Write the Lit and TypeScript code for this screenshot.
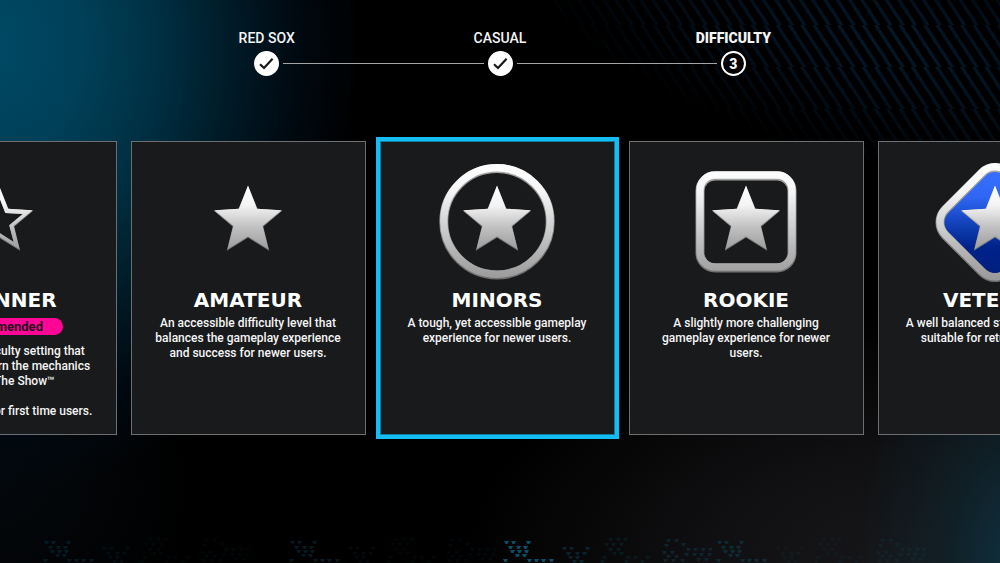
import { LitElement, html, svg, css, nothing } from "lit";
import { customElement, property, state } from "lit/decorators.js";
import { classMap } from "lit/directives/class-map.js";

type Emblem = "outline" | "plain" | "circle" | "square" | "diamond";

interface Difficulty {
  id: string;
  name: string;
  emblem: Emblem;
  tag?: string;
  lines: string[];
}

const DIFFICULTIES: Difficulty[] = [
  {
    id: "beginner",
    name: "BEGINNER",
    emblem: "outline",
    tag: "Recommended",
    lines: [
      "A beginner difficulty setting that",
      "helps players learn the mechanics",
      "of MLB® The Show™",
      "",
      "Recommended for first time users.",
    ],
  },
  {
    id: "amateur",
    name: "AMATEUR",
    emblem: "plain",
    lines: ["An accessible difficulty level that", "balances the gameplay experience", "and success for newer users."],
  },
  {
    id: "minors",
    name: "MINORS",
    emblem: "circle",
    lines: ["A tough, yet accessible gameplay", "experience for newer users."],
  },
  {
    id: "rookie",
    name: "ROOKIE",
    emblem: "square",
    lines: ["A slightly more challenging", "gameplay experience for newer", "users."],
  },
  {
    id: "veteran",
    name: "VETERAN",
    emblem: "diamond",
    lines: ["A well balanced starting difficulty", "suitable for returning users."],
  },
];

function starPath(cx: number, cy: number, outer: number, inner: number): string {
  const points: string[] = [];
  for (let i = 0; i < 10; i++) {
    const r = i % 2 ? inner : outer;
    const a = (Math.PI / 5) * i - Math.PI / 2;
    points.push(`${(cx + r * Math.cos(a)).toFixed(2)} ${(cy + r * Math.sin(a)).toFixed(2)}`);
  }
  return `M${points.join("L")}Z`;
}

const STAR = starPath(60, 59.6, 36, 16);
const STAR_FACE = starPath(60, 59, 35, 15.2);
const STAR_HOLE = starPath(60, 59.8, 25, 10.8);

@customElement("difficulty-emblem")
export class DifficultyEmblem extends LitElement {
  @property() kind: Emblem = "plain";

  static styles = css`
    :host {
      display: block;
      width: 120px;
      height: 120px;
    }
    svg {
      display: block;
      width: 100%;
      height: 100%;
    }
  `;

  private frame() {
    switch (this.kind) {
      case "circle":
        return svg`
          <circle cx="60" cy="59.8" r="53.2" fill="none" stroke="url(#edge)" stroke-width="9"/>
          <circle cx="60" cy="59" r="53.2" fill="none" stroke="url(#ring)" stroke-width="7.4"/>`;
      case "square":
        return svg`
          <rect x="14" y="14" width="92" height="92" rx="15" fill="none" stroke="url(#edge)" stroke-width="9"/>
          <rect x="14" y="13" width="92" height="92" rx="15" fill="none" stroke="url(#ring)" stroke-width="7.4"/>`;
      case "diamond":
        return svg`
          <path d="M60 5.5C65 5.5 69.5 7.5 73 11L109.5 47.5C113 51 115 55.5 115 60.5S113 70 109.5 73.5L73 110C69.5 113.5 65 115.5 60 115.5S50.5 113.5 47 110L10.5 73.5C7 70 5 65.5 5 60.5S7 51 10.5 47.5L47 11C50.5 7.5 55 5.5 60 5.5Z" fill="url(#blue)" stroke="url(#edge)" stroke-width="9"/>
          <path d="M60 4.8C65 4.8 69.5 6.8 73 10.3L109.5 46.8C113 50.3 115 54.8 115 59.8S113 69.3 109.5 72.8L73 109.3C69.5 112.8 65 114.8 60 114.8S50.5 112.8 47 109.3L10.5 72.8C7 69.3 5 64.8 5 59.8S7 50.3 10.5 46.8L47 10.3C50.5 6.8 55 4.8 60 4.8Z" fill="none" stroke="url(#ring)" stroke-width="7.4"/>`;
      default:
        return nothing;
    }
  }

  render() {
    const hollow = this.kind === "outline";
    return html`<svg viewBox="0 0 120 120" aria-hidden="true">
      <defs>
        <linearGradient id="face" x1="0" y1="24" x2="0" y2="88" gradientUnits="userSpaceOnUse">
          <stop offset="0" stop-color="#fff"/><stop offset=".3" stop-color="#f4f4f4"/>
          <stop offset=".65" stop-color="#c0c0c0"/><stop offset="1" stop-color="#9c9c9c"/>
        </linearGradient>
        <linearGradient id="shade" x1="0" y1="24" x2="0" y2="88" gradientUnits="userSpaceOnUse">
          <stop offset="0" stop-color="#d5d5d5"/><stop offset="1" stop-color="#747474"/>
        </linearGradient>
        <linearGradient id="ring" x1="0" y1="2" x2="0" y2="118" gradientUnits="userSpaceOnUse">
          <stop offset="0" stop-color="#fff"/><stop offset=".25" stop-color="#f4f4f4"/>
          <stop offset=".75" stop-color="#b4b4b4"/><stop offset="1" stop-color="#999"/>
        </linearGradient>
        <linearGradient id="edge" x1="0" y1="2" x2="0" y2="118" gradientUnits="userSpaceOnUse">
          <stop offset="0" stop-color="#a8a8a8"/><stop offset="1" stop-color="#6e6e6e"/>
        </linearGradient>
        <linearGradient id="blue" x1="0" y1="10" x2="0" y2="110" gradientUnits="userSpaceOnUse">
          <stop offset="0" stop-color="#366fff"/><stop offset=".25" stop-color="#2f66f4"/>
          <stop offset=".5" stop-color="#1444bd"/><stop offset=".75" stop-color="#00238a"/>
          <stop offset="1" stop-color="#001f80"/>
        </linearGradient>
      </defs>
      ${this.frame()}
      <path d=${hollow ? STAR + STAR_HOLE : STAR} fill="url(#shade)" fill-rule="evenodd"/>
      <path d=${hollow ? STAR_FACE + STAR_HOLE : STAR_FACE} fill="url(#face)" fill-rule="evenodd"/>
    </svg>`;
  }
}

// Triangle mosaic along the lower edge: [x, y] of each small triangle in a motif.
const MOTIF_A = [[0, 0], [7, 0], [22, 0], [4, 5], [12, 5], [19, 5], [6, 9], [13, 9], [20, 9], [11, 13], [18, 13], [-1, 18], [23, 18], [30, 18], [37, 18], [45, 18]];
const MOTIF_B = [[0, 6], [7, 6], [23, 6], [4, 11], [13, 11], [20, 11], [6, 15], [13, 15], [10, 19], [17, 19]];
const MOTIF_C = [[6, -3], [14, -3], [21, -3], [2, 2], [9, 2], [17, 2], [6, 7], [14, 7], [10, 11], [17, 11], [0, 15], [24, 15], [31, 15], [43, 15], [-2, 19], [22, 19], [38, 19]];
const MOTIF_D = [[4, -2], [12, -2], [2, 3], [19, 2], [0, 10], [8, 10], [24, 7], [31, 7], [39, 7], [46, 7], [4, 14], [12, 14], [22, 12], [30, 12], [37, 12], [45, 12], [1, 18], [9, 18], [18, 18], [34, 17], [42, 17]];
const MOSAIC: [number[][], number, number][] = [
  [MOTIF_A, 44, 0.26], [MOTIF_B, 102, 0.12], [MOTIF_C, 142, 0.08], [MOTIF_D, 200, 0.08],
  [MOTIF_A, 290, 0.28], [MOTIF_B, 348, 0.1], [MOTIF_C, 388, 0.08], [MOTIF_D, 446, 0.09],
  [MOTIF_A, 504, 0.85], [MOTIF_B, 562, 0.32], [MOTIF_C, 602, 0.18], [MOTIF_D, 662, 0.28],
  [MOTIF_A, 717, 0.34], [MOTIF_B, 776, 0.1], [MOTIF_C, 816, 0.1], [MOTIF_D, 876, 0.14],
];

@customElement("stage-backdrop")
export class StageBackdrop extends LitElement {
  static styles = css`
    :host {
      display: block;
      background:
        radial-gradient(ellipse 37% 80% at -1% 8%, #004966 0%, #004058 25%, #003044 45%, #001a26 66%, #000a12 82%, transparent 100%),
        radial-gradient(ellipse 16% 50% at 102% 100%, #0f3140 0%, #0f242db0 45%, transparent 100%),
        radial-gradient(ellipse 46% 45% at 92% 100%, #171719 0%, #101012 45%, transparent 100%),
        radial-gradient(ellipse 20% 30% at 0% 86%, #04080c 0%, transparent 100%),
        #000;
    }
    svg {
      display: block;
      width: 100%;
      height: 100%;
    }
  `;

  render() {
    return html`<svg viewBox="0 0 1000 563" preserveAspectRatio="xMidYMax slice" aria-hidden="true">
      <defs>
        <pattern id="weave" width="12.3" height="42" y="25" patternUnits="userSpaceOnUse">
          ${[-3, -2, -1, 0, 1].map(
            (i) => svg`<path d="M${i * 12.3 + 1} -2L${i * 12.3 + 31} 44" stroke="#04182a" stroke-width="3.2"/>`,
          )}
        </pattern>
        <radialGradient id="fade" cx="0" cy="0" r="1" gradientUnits="userSpaceOnUse"
          gradientTransform="translate(890 44) rotate(14) scale(380 125)">
          <stop offset="0" stop-color="#fff"/><stop offset=".35" stop-color="#fff" stop-opacity=".75"/>
          <stop offset="1" stop-color="#fff" stop-opacity="0"/>
        </radialGradient>
        <mask id="veil" maskUnits="userSpaceOnUse" x="0" y="0" width="1000" height="563">
          <rect width="1000" height="563" fill="url(#fade)"/>
        </mask>
      </defs>
      <rect x="480" width="520" height="240" fill="url(#weave)" mask="url(#veil)"/>
      ${MOSAIC.map(
        ([motif, x, opacity]) =>
          svg`<path fill="#0d5a78" opacity=${opacity} d=${motif.map(([dx, dy]) => `M${x + dx} ${541 + dy}h5l-1.5 3h-2z`).join("")}/>`,
      )}
    </svg>`;
  }
}

@customElement("step-tracker")
export class StepTracker extends LitElement {
  private steps = [
    { label: "RED SOX", done: true },
    { label: "CASUAL", done: true },
    { label: "DIFFICULTY", done: false },
  ];

  static styles = css`
    :host {
      display: block;
    }
    ol {
      display: grid;
      grid-template-columns: repeat(3, 1fr);
      margin: 0;
      padding: 0;
      list-style: none;
    }
    li {
      display: flex;
      flex-direction: column;
      gap: 5px;
      text-align: center;
      font-size: 14px;
      line-height: 16px;
    }
    .current {
      font-weight: 900;
    }
    .track {
      display: flex;
      align-items: center;
      gap: 4px;
    }
    .rule {
      flex: 1;
      height: 1px;
      background: #a2a4a6;
    }
    .blank {
      background: none;
    }
    .dot {
      display: grid;
      place-items: center;
      box-sizing: border-box;
      width: 25px;
      height: 25px;
      border: 2px solid #fff;
      border-radius: 50%;
      background: #fff;
    }
    .current .dot {
      background: #000;
    }
    svg {
      display: block;
      width: 17px;
      height: 17px;
    }
  `;

  render() {
    const last = this.steps.length - 1;
    return html`<ol>
      ${this.steps.map(
        (step, i) => html`<li class=${classMap({ current: !step.done })} aria-current=${step.done ? nothing : "step"}>
          <span>${step.label}</span>
          <div class="track">
            <span class=${classMap({ rule: true, blank: i === 0 })}></span>
            <span class="dot">
              ${step.done
                ? html`<svg viewBox="0 0 17 17" aria-hidden="true">
                    <path d="M2 9.3L6 13L14.6 3.8" fill="none" stroke="#17181a" stroke-width="2.2"/>
                  </svg>`
                : i + 1}
            </span>
            <span class=${classMap({ rule: true, blank: i === last })}></span>
          </div>
        </li>`,
      )}
    </ol>`;
  }
}

@customElement("app-root")
export class AppRoot extends LitElement {
  @state() private selected = "minors";

  static styles = css`
    :host {
      display: block;
      position: relative;
      box-sizing: border-box;
      min-height: 100vh;
      padding-top: 30px;
      overflow: hidden;
      color: #f5f5f5;
      background: #000;
      font-family: Roboto, "Liberation Sans", sans-serif;
      font-weight: 500;
    }
    stage-backdrop {
      position: absolute;
      inset: 0;
    }
    header,
    main {
      position: relative;
    }
    step-tracker {
      width: 70%;
      margin: 0 auto;
    }
    .cards {
      display: flex;
      justify-content: center;
      gap: 14px;
      margin-top: 65px;
      padding-right: 6px;
    }
    .card {
      display: flex;
      flex: none;
      flex-direction: column;
      align-items: center;
      box-sizing: border-box;
      width: 235px;
      min-height: 294px;
      margin: 0;
      padding: 20px 12px 12px;
      border: 1px solid #6c6e70;
      border-radius: 0;
      background: #191a1c;
      color: inherit;
      font: inherit;
      font-size: 12px;
      line-height: 15px;
      cursor: pointer;
    }
    .selected {
      border-color: #12799f;
      outline: 4px solid #14bdf4;
    }
    .name {
      margin-top: 6px;
      color: #fff;
      font-family: "DejaVu Sans", sans-serif;
      font-size: 20px;
      font-weight: 700;
      line-height: 24px;
    }
    .tag {
      margin: 6px 0 5px;
      padding: 1px 20px;
      border-radius: 9px;
      background: #ff0696;
      color: #26101e;
      font-size: 13px;
      font-weight: 700;
    }
    .text {
      margin-top: 4px;
      white-space: nowrap;
    }
    .line {
      display: block;
      min-height: 15px;
    }
  `;

  private renderCard(item: Difficulty) {
    const on = item.id === this.selected;
    return html`<button
      type="button"
      class=${classMap({ card: true, selected: on })}
      aria-pressed=${on ? "true" : "false"}
      @click=${() => (this.selected = item.id)}
    >
      <difficulty-emblem .kind=${item.emblem}></difficulty-emblem>
      <span class="name">${item.name}</span>
      ${item.tag ? html`<span class="tag">${item.tag}</span>` : nothing}
      <span class="text">${item.lines.map((line) => html`<span class="line">${line}</span>`)}</span>
    </button>`;
  }

  render() {
    return html`
      <stage-backdrop></stage-backdrop>
      <header><step-tracker></step-tracker></header>
      <main class="cards">${DIFFICULTIES.map((item) => this.renderCard(item))}</main>
    `;
  }
}
